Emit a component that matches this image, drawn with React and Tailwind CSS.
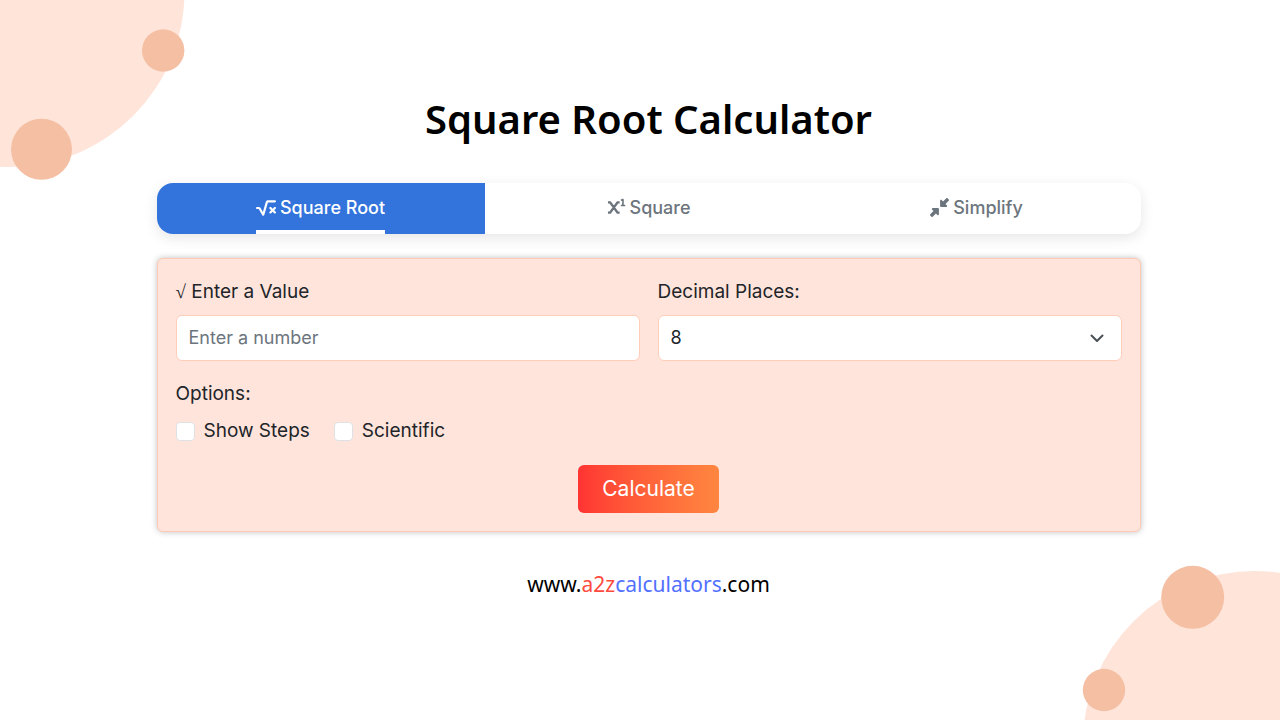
import {
  FaSquareRootVariable,
  FaDownLeftAndUpRightToCenter,
} from "react-icons/fa6";

function SuperscriptIcon({ className }) {
  return (
    <svg
      className={className}
      viewBox="0 0 20 20"
      fill="none"
      stroke="currentColor"
      strokeWidth="2.4"
      strokeLinejoin="round"
      aria-hidden="true"
    >
      <path d="M1 4.5h2.2l8 11h2.1M13.300 4.500h-2.100l-8 11H1" />
      <path d="M14.600 2.300l2.200-.6v6M14.600 7.900h4.600" strokeWidth="1.7" />
    </svg>
  );
}

const tabs = [
  { label: "Square Root", Icon: FaSquareRootVariable, active: true },
  { label: "Square", Icon: SuperscriptIcon, active: false },
  { label: "Simplify", Icon: FaDownLeftAndUpRightToCenter, active: false },
];

function Corners() {
  return (
    <>
      <svg className="absolute top-0 left-0" width="200" height="200" viewBox="0 0 200 200" aria-hidden="true">
        <circle cx="9.500" cy="-8" r="175" fill="#ffe4d9" />
        <circle cx="163.2" cy="50.5" r="21.2" fill="#f5bfa4" />
        <circle cx="41.5" cy="149.3" r="30.5" fill="#f5bfa4" />
      </svg>
      <svg className="absolute right-0 bottom-0" width="220" height="170" viewBox="0 0 220 170" aria-hidden="true">
        <circle cx="195" cy="193" r="172" fill="#ffe4d9" />
        <circle cx="132.7" cy="47.3" r="31.5" fill="#f5bfa4" />
        <circle cx="44" cy="140" r="21.2" fill="#f5bfa4" />
      </svg>
    </>
  );
}

function Tabs() {
  return (
    <div
      role="tablist"
      className="grid grid-cols-3 overflow-hidden rounded-2xl bg-white shadow-[0_4px_14px_rgba(0,0,0,0.1)]"
    >
      {tabs.map(({ label, Icon, active }) => (
        <button
          key={label}
          type="button"
          role="tab"
          aria-selected={active}
          className={
            active
              ? "flex justify-center bg-[#3273dc] text-lg font-medium text-white"
              : "flex justify-center bg-white text-lg font-medium text-[#6c757d]"
          }
        >
          <span
            className={
              active
                ? "flex h-[51px] items-center gap-1 border-b-4 border-white pt-0.5"
                : "flex h-[51px] items-center gap-1 pb-0.5"
            }
          >
            <Icon className={active ? "size-5" : "size-[19px]"} />
            {label}
          </span>
        </button>
      ))}
    </div>
  );
}

function Option({ id, label }) {
  return (
    <div className="flex items-center gap-[9px]">
      <input
        id={id}
        type="checkbox"
        className="size-[19px] appearance-none rounded-sm border border-[#dee2e6] bg-white checked:bg-[#3273dc]"
      />
      <label htmlFor={id}>{label}</label>
    </div>
  );
}

function CalculatorForm() {
  return (
    <form
      onSubmit={(e) => e.preventDefault()}
      className="mt-6 rounded-md border border-[#ffc9b5] bg-[#ffe4db] px-[18px] pt-[19px] pb-[18px] text-[19px] leading-7 text-[#212529] shadow-[0_0_6px_rgba(0,0,0,0.25)]"
    >
      <div className="grid grid-cols-2 gap-[18px]">
        <div className="flex flex-col gap-[9px]">
          <label htmlFor="value">
            <span className="font-['Liberation_Serif',serif]">√</span> Enter a Value
          </label>
          <input
            id="value"
            type="text"
            placeholder="Enter a number"
            className="h-[46px] w-full rounded-md border border-[#ffcdb9] bg-white px-3 pb-0.5 text-lg placeholder:text-[#6c757d]"
          />
        </div>
        <div className="flex flex-col gap-[9px]">
          <label htmlFor="places">Decimal Places:</label>
          <div className="relative">
            <select
              id="places"
              defaultValue="8"
              className="h-[46px] w-full appearance-none rounded-md border border-[#ffcdb9] bg-white px-3 text-lg"
            >
              <option>2</option>
              <option>4</option>
              <option>6</option>
              <option>8</option>
            </select>
            <svg
              className="pointer-events-none absolute top-[15px] right-[17px] size-4"
              viewBox="0 0 16 16"
              fill="none"
              stroke="#495057"
              strokeWidth="2"
              strokeLinecap="round"
              strokeLinejoin="round"
              aria-hidden="true"
            >
              <path d="M2.5 5.500l5.500 5.500L13.500 5.500" />
            </svg>
          </div>
        </div>
      </div>
      <fieldset className="mt-[19px]">
        <legend>Options:</legend>
        <div className="mt-[9px] flex gap-6">
          <Option id="steps" label="Show Steps" />
          <Option id="scientific" label="Scientific" />
        </div>
      </fieldset>
      <div className="mt-5 flex justify-center">
        <button
          type="submit"
          className="h-12 rounded-md bg-linear-to-r from-[#ff3333] to-[#ff8640] px-6 text-[21px] text-white"
        >
          Calculate
        </button>
      </div>
    </form>
  );
}

export default function App() {
  return (
    <div className="relative min-h-screen overflow-hidden bg-white pl-[17px] font-['Inter',sans-serif]">
      <Corners />
      <main className="relative mx-auto w-full max-w-[984px] pt-[95px]">
        <h1 className="text-center font-['Noto_Sans',sans-serif] text-[40px] leading-12 font-semibold text-black">
          Square Root Calculator
        </h1>
        <div className="mt-10">
          <Tabs />
        </div>
        <CalculatorForm />
        <p className="mt-9 text-center font-['Noto_Sans',sans-serif] text-[21px] leading-8 text-black">
          <a href="#home">
            www.<span className="text-[#ff4b3e]">a2z</span>
            <span className="text-[#5271ff]">calculators</span>.com
          </a>
        </p>
      </main>
    </div>
  );
}
